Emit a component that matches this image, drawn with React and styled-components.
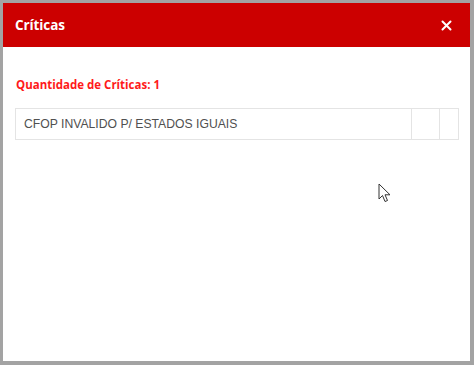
import React from 'react'
import styled, { createGlobalStyle } from 'styled-components'

const GlobalStyle = createGlobalStyle`
    html, body {
        margin: 0;
        padding: 0;
        background: #a3a3a3;
    }
    * {
        box-sizing: border-box;
    }
`

const Page = styled.div`
    width: 474px;
    height: 365px;
    padding: 3px 4px 4px 3px;
    background: #a3a3a3;
    position: relative;
`

const Dialog = styled.div`
    width: 100%;
    height: 100%;
    background: #FFFFFF;
    display: flex;
    flex-direction: column;
    font-family: 'Open Sans', 'Liberation Sans', sans-serif;
`

const Header = styled.div`
    height: 44px;
    background: #CC0000;
    display: flex;
    align-items: center;
    justify-content: space-between;
    padding: 0 18px 0 12px;
`

const Title = styled.h2`
    margin: 0;
    font-size: 13.5px;
    font-weight: 700;
    color: #FFFFFF;
    letter-spacing: -0.1px;
`

const CloseButton = styled.button`
    border: none;
    background: transparent;
    padding: 0;
    width: 12px;
    height: 12px;
    display: flex;
    align-items: center;
    justify-content: center;
    cursor: pointer;
`

const Body = styled.div`
    flex: 1;
    display: flex;
    flex-direction: column;
    padding: 30px 11px 0 12px;
    position: relative;
`

const Count = styled.p`
    margin: 0 0 15px 1px;
    font-size: 11.5px;
    font-weight: 700;
    color: #FF1A1A;
    line-height: 16px;
`

const Table = styled.div`
    display: grid;
    grid-template-columns: 1fr 28px 19px;
    height: 32px;
    border: 1px solid #E4E4E4;
`

const Cell = styled.div`
    display: flex;
    align-items: center;
    padding-left: ${p => (p.$text ? '8px' : '0')};
    border-left: ${p => (p.$first ? 'none' : '1px solid #E4E4E4')};
    font-family: 'Liberation Sans', Arial, sans-serif;
    font-size: 12.2px;
    color: #505050;
`

const Pointer = styled.svg`
    position: absolute;
    left: 375px;
    top: 136px;
`

const CloseIcon = () => (
    <svg width="11" height="11" viewBox="0 0 11 11">
        <path d="M1.5 1.5 L9.5 9.5 M9.5 1.5 L1.5 9.5" stroke="#FFFFFF" strokeWidth="2" strokeLinecap="round" />
    </svg>
)

const App = () => {
    return (
        <Page>
            <GlobalStyle />
            <Dialog>
                <Header>
                    <Title>Críticas</Title>
                    <CloseButton aria-label="Fechar">
                        <CloseIcon />
                    </CloseButton>
                </Header>
                <Body>
                    <Count>Quantidade de Críticas: 1</Count>
                    <Table>
                        <Cell $first $text>CFOP INVALIDO P/ ESTADOS IGUAIS</Cell>
                        <Cell />
                        <Cell />
                    </Table>
                    <Pointer width="14" height="20" viewBox="0 0 14 20">
                        <path d="M1 1 L1 16 L4.5 12.5 L7 18.5 L9.5 17.5 L7 11.8 L12 11.8 Z" fill="#FFFFFF" stroke="#333333" strokeWidth="1" strokeLinejoin="round" />
                    </Pointer>
                </Body>
            </Dialog>
        </Page>
    )
}

export default App
